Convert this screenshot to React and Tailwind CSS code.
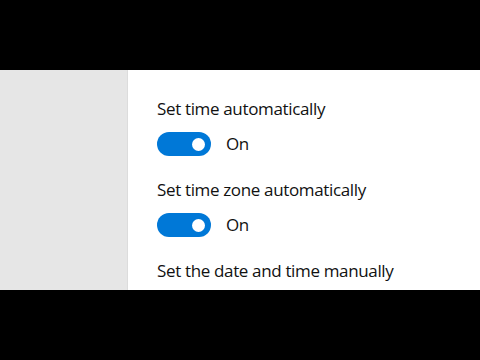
import React from 'react';

function Toggle() {
  return (
    <div className="flex items-center gap-[15px]">
      <div className="w-[54px] h-[24px] rounded-full bg-[#0078d7] flex items-center justify-end pr-[6px]">
        <div className="w-[13px] h-[13px] rounded-full bg-white" />
      </div>
      <span>On</span>
    </div>
  );
}

export default function App() {
  return (
    <div className="w-[480px] h-[360px] bg-black flex flex-col overflow-hidden" style={{ fontFamily: '"Open Sans", "Noto Sans", sans-serif' }}>
      <div className="h-[70px]" />
      <div className="h-[220px] flex overflow-hidden">
        <div className="w-[128px] bg-[#e6e6e6] border-r border-[#dcdcdc]" />
        <div className="flex-1 bg-white pl-[29px] pt-[27px] text-[17px] leading-[24px] tracking-[-0.35px] text-[#111]">
          <div>Set time automatically</div>
          <div className="mt-[11px]"><Toggle /></div>
          <div className="mt-[22px]">Set time zone automatically</div>
          <div className="mt-[11px]"><Toggle /></div>
          <div className="mt-[22px]">Set the date and time manually</div>
        </div>
      </div>
      <div className="h-[70px]" />
    </div>
  );
}
